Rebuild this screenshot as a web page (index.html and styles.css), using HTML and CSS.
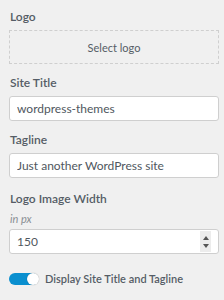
FILE: index.html
```html
<!DOCTYPE html>
<html>
<head>
<meta charset="utf-8">
<link rel="stylesheet" href="styles.css">
</head>
<body>
<div class="panel">
  <div class="control">
    <div class="title">Logo</div>
    <div class="upload">Select logo</div>
  </div>
  <div class="control">
    <div class="title">Site Title</div>
    <input class="field" type="text" value="wordpress-themes">
  </div>
  <div class="control">
    <div class="title">Tagline</div>
    <input class="field" type="text" value="Just another WordPress site">
  </div>
  <div class="control control-num">
    <div class="title">Logo Image Width</div>
    <div class="desc">in px</div>
    <div class="numbox">
      <input class="numfield" type="text" value="150">
      <div class="spin"><span class="up"></span><span class="down"></span></div>
    </div>
  </div>
  <div class="toggle-row">
    <span class="toggle"><span class="knob"></span></span>
    <span class="toggle-label">Display Site Title and Tagline</span>
  </div>
</div>
</body>
</html>
```
FILE: styles.css
```css
html, body {
  margin: 0;
  padding: 0;
  background: #f0f0f0;
}
body {
  font-family: "Lato", "Open Sans", sans-serif;
  color: #555d66;
  width: 224px;
  height: 300px;
  overflow: hidden;
}
.panel {
  padding: 9px 5px 0 9px;
  display: flex;
  flex-direction: column;
}
.control {
  display: flex;
  flex-direction: column;
  margin-bottom: 11px;
}
.control-num {
  margin-top: 2px;
  margin-bottom: 0;
}
.title {
  font-size: 12px;
  font-weight: 600;
  line-height: 16px;
  margin: 0 0 5px 1px;
}
.control-num .title {
  margin-bottom: 5px;
}
.upload {
  height: 34px;
  box-sizing: border-box;
  border: 1px dashed #cfcfcf;
  display: flex;
  align-items: center;
  justify-content: center;
  font-size: 11px;
  color: #555d66;
}
.field, .numbox {
  box-sizing: border-box;
  height: 25px;
  width: 210px;
  border: 1px solid #cfcfcf;
  border-radius: 3px;
  background: #fff;
  font-family: inherit;
  font-size: 12px;
  color: #50575e;
  padding: 0 7px;
  margin: 0;
  outline: none;
}
.numbox {
  display: flex;
  align-items: center;
  padding: 0 7px 0 0;
}
.numfield {
  flex: 1;
  min-width: 0;
  border: 0;
  background: transparent;
  font-family: inherit;
  font-size: 12px;
  color: #50575e;
  padding: 0 7px;
  outline: none;
}
.spin {
  width: 11px;
  height: 21px;
  background: #ececec;
  display: flex;
  flex-direction: column;
  align-items: center;
  justify-content: center;
  gap: 4px;
}
.up, .down {
  width: 0;
  height: 0;
  border-left: 3px solid transparent;
  border-right: 3px solid transparent;
}
.up { border-bottom: 4px solid #555; }
.down { border-top: 4px solid #555; }
.desc {
  font-size: 11px;
  font-style: italic;
  color: #8a8f94;
  line-height: 14px;
  margin: 0 0 3px 1px;
}
.toggle-row {
  display: flex;
  align-items: center;
  margin-top: 18px;
}
.toggle {
  width: 29px;
  height: 12px;
  border-radius: 6px;
  background: #0a8fcf;
  display: flex;
  justify-content: flex-end;
  align-items: center;
}
.knob {
  width: 12px;
  height: 12px;
  border-radius: 50%;
  background: #fff;
  box-shadow: 0 0 1px rgba(0,0,0,0.4);
  margin-right: -1px;
}
.toggle-label {
  font-size: 11px;
  font-weight: 600;
  margin-left: 7px;
  color: #555d66;
}
```
